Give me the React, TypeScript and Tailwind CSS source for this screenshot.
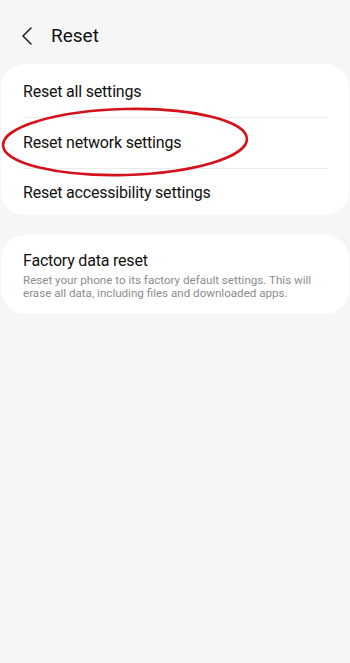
import React from 'react';

const font = { fontFamily: 'Roboto, "Noto Sans", sans-serif' };

const Row: React.FC<{ label: string; last?: boolean }> = ({ label, last }) => (
  <div className="px-[22px]">
    <div className={`flex items-center ${last ? 'h-[46px] pt-[2px]' : 'h-[51px] border-b border-[#ebebeb]'}`}>
      <span className="text-[16px] tracking-[-0.2px] text-[#111]">{label}</span>
    </div>
  </div>
);

export default function App() {
  return (
    <div className="w-[350px] h-[663px] bg-[#f6f6f6] relative overflow-hidden" style={font}>
      {/* header */}
      <div className="h-[64px] flex items-center pl-[20px] pt-[8px]">
        <svg width="16" height="20" viewBox="0 0 16 20" className="mr-[15px]">
          <path d="M11 2 L3 10 L11 18" fill="none" stroke="#222" strokeWidth="1.6" strokeLinecap="round" strokeLinejoin="round" />
        </svg>
        <span className="text-[19px] text-[#111]">Reset</span>
      </div>

      <div className="mx-[1px] bg-white rounded-[24px] pt-[3px]">
        <Row label="Reset all settings" />
        <Row label="Reset network settings" />
        <Row label="Reset accessibility settings" last />
      </div>

      <div className="mx-[1px] mt-[20px] bg-white rounded-[24px] pl-[22px] pr-[12px] pt-[16px] pb-[14px]">
        <div className="text-[16px] tracking-[-0.2px] text-[#111] leading-[20px]">Factory data reset</div>
        <div className="text-[11.6px] text-[#8c8c8c] leading-[13px] mt-[3px]">
          <div>Reset your phone to its factory default settings. This will</div>
          <div>erase all data, including files and downloaded apps.</div>
        </div>
      </div>

      {/* red annotation ellipse */}
      <svg className="absolute left-0 top-[104px]" width="260" height="76" viewBox="0 0 260 76">
        <ellipse cx="125" cy="38" rx="122" ry="33" fill="none" stroke="#d3121c" strokeWidth="2.6" transform="rotate(-1.5 125 38)" />
      </svg>
    </div>
  );
}
